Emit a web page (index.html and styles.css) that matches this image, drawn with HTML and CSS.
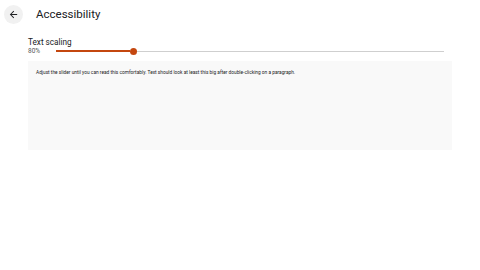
FILE: index.html
```html
<!DOCTYPE html>
<html>
<head>
<meta charset="utf-8">
<link rel="stylesheet" href="styles.css">
</head>
<body>
<div class="page">
  <header class="header">
    <div class="back">
      <svg width="11" height="11" viewBox="0 0 24 24"><path d="M20 11H7.83l5.59-5.59L12 4l-8 8 8 8 1.41-1.41L7.83 13H20v-2z" fill="#202124"/></svg>
    </div>
    <h1 class="title">Accessibility</h1>
  </header>
  <section class="content">
    <div class="label">Text scaling</div>
    <div class="slider-row">
      <div class="value">80%</div>
      <div class="slider">
        <div class="track-active"></div>
        <div class="thumb"></div>
        <div class="track-rest"></div>
      </div>
    </div>
    <div class="preview">
      <p class="sample">Adjust the slider until you can read this comfortably. Text should look at least this big after double-clicking on a paragraph.</p>
    </div>
  </section>
</div>
</body>
</html>
```
FILE: styles.css
```css
html, body { margin: 0; padding: 0; background: #fff; }
body { font-family: Roboto, "Noto Sans", sans-serif; color: #202124; }
.page { width: 480px; height: 270px; }
.header { display: flex; align-items: center; height: 28px; padding-left: 4px; }
.back { width: 19px; height: 19px; border-radius: 50%; background: #f1f1f1; display: flex; align-items: center; justify-content: center; }
.title { margin: 0 0 0 13px; font-size: 11.5px; font-weight: 400; line-height: 16px; }
.content { padding: 9px 28px 0 28px; }
.label { font-size: 8.2px; line-height: 10px; }
.slider-row { display: flex; align-items: center; height: 8px; }
.value { width: 28px; font-size: 6.5px; line-height: 8px; color: #555; }
.slider { display: flex; align-items: center; width: 388px; }
.track-active { width: 74px; height: 1.5px; background: #c4470f; }
.thumb { width: 7px; height: 7px; border-radius: 50%; background: #c4470f; flex: none; }
.track-rest { flex: 1; height: 1px; background: #cfcfcf; }
.preview { margin-top: 6px; width: 424px; height: 89px; background: #f9f9f9; box-sizing: border-box; padding: 9px 8px; }
.sample { margin: 0; font-size: 4.8px; line-height: 6px; color: #202124; }
```
